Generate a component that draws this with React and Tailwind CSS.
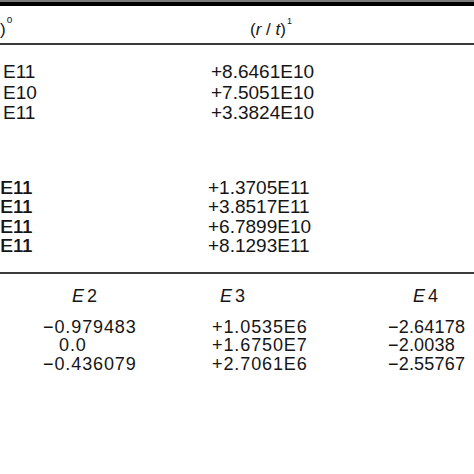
const font = { fontFamily: '"Liberation Sans", Arial, sans-serif' };

const groupOne = [
  { left: "E11", mid: "+8.6461E10" },
  { left: "E10", mid: "+7.5051E10" },
  { left: "E11", mid: "+3.3824E10" },
];

const groupTwo = [
  { left: "E11", mid: "+1.3705E11" },
  { left: "E11", mid: "+3.8517E11" },
  { left: "E11", mid: "+6.7899E10" },
  { left: "E11", mid: "+8.1293E11" },
];

const lower = [
  { e2: "\u22120.979483", e3: "+1.0535E6", e4: "\u22122.64178" },
  { e2: "0.0", e3: "+1.6750E7", e4: "\u22122.0038", zero: true },
  { e2: "\u22120.436079", e3: "+2.7061E6", e4: "\u22122.55767" },
];

export default function App() {
  return (
    <div className="w-[474px] h-[474px] bg-white text-[#151515] overflow-hidden" style={font}>
      {/* top heavy rule */}
      <div className="h-[2px] bg-[#7a7a7a]" />
      <div className="h-[4px] bg-black" />

      {/* header */}
      <div className="flex h-[37px] pt-[13px] text-[17px] leading-[22px]">
        <div className="w-[250px]">
          )<sup className="text-[10px] align-[7px] ml-[1px]">o</sup>
        </div>
        <div>
          (<i>r</i> / <i>t</i>)<sup className="text-[9px] align-[7px] ml-[1px]">1</sup>
        </div>
      </div>
      <div className="h-[2px] bg-[#3a3a3a]" />

      {/* group one */}
      <div className="mt-[17px] text-[19px] leading-[20.5px]">
        {groupOne.map((r, i) => (
          <div key={i} className="flex">
            <div className="w-[211px] pl-[3px]">{r.left}</div>
            <div>{r.mid}</div>
          </div>
        ))}
      </div>

      {/* group two */}
      <div className="mt-[54px] text-[19px] leading-[19.5px]">
        {groupTwo.map((r, i) => (
          <div key={i} className="flex">
            <div className="w-[208px] [text-shadow:0.4px_0_0_#151515]">{r.left}</div>
            <div>{r.mid}</div>
          </div>
        ))}
      </div>

      <div className="mt-[16px] h-[2px] bg-[#3a3a3a]" />

      {/* lower table */}
      <div className="mt-[12px] flex text-[18px] leading-[20px] italic">
        <div className="w-[212px] pl-[72px]">E<span className="not-italic ml-[3px]">2</span></div>
        <div className="w-[176px] pl-[8px]">E<span className="not-italic ml-[3px]">3</span></div>
        <div className="pl-[25px]">E<span className="not-italic ml-[3px]">4</span></div>
      </div>
      <div className="mt-[12px] text-[18px] leading-[18.5px]">
        {lower.map((r, i) => (
          <div key={i} className="flex">
            <div className={`w-[212px] tracking-[0.9px] ${r.zero ? "pl-[59px]" : "pl-[43px]"}`}>{r.e2}</div>
            <div className="w-[176px] tracking-[0.9px]">{r.e3}</div>
            <div className="tracking-[0.2px]">{r.e4}</div>
          </div>
        ))}
      </div>
    </div>
  );
}
